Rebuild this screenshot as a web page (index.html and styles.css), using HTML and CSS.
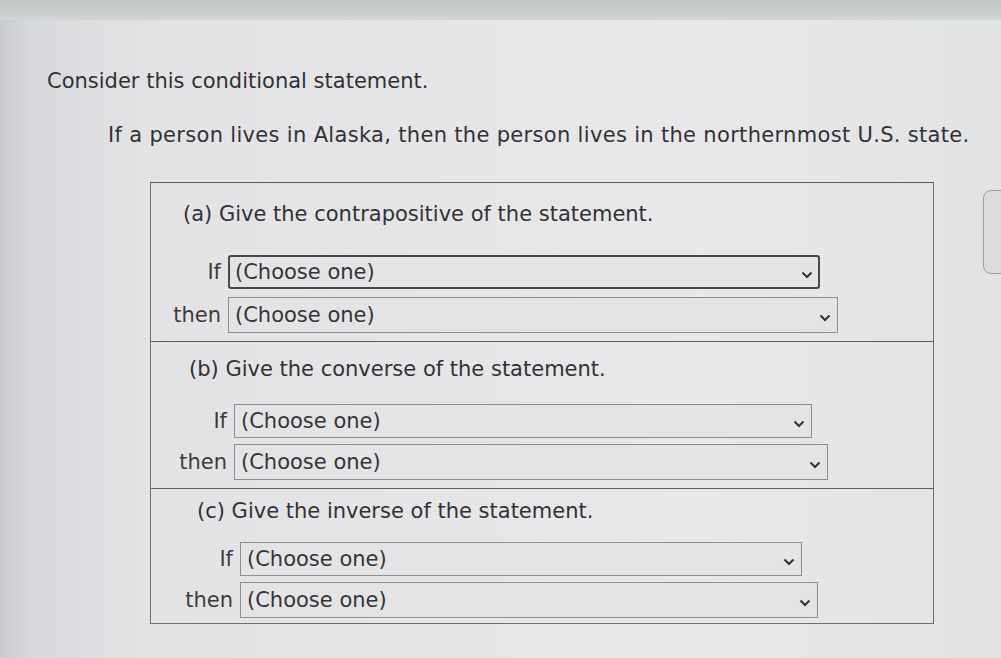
FILE: index.html
```html
<!DOCTYPE html>
<html>
<head>
<meta charset="utf-8">
<link rel="stylesheet" href="styles.css">
</head>
<body>
<div class="topbar"></div>
<main class="page">
  <p class="lead">Consider this conditional statement.</p>
  <p class="statement">If a person lives in Alaska, then the person lives in the northernmost U.S. state.</p>
  <div class="box">
    <section class="part pa">
      <p class="title">(a) Give the contrapositive of the statement.</p>
      <div class="rows">
        <span class="label">If</span>
        <div class="select focus"><span>(Choose one)</span><svg class="chev" viewBox="0 0 12 8" width="12" height="8"><path d="M1.5 1.5 L6 6 L10.5 1.5" fill="none" stroke="#333" stroke-width="2"/></svg></div>
        <span class="label">then</span>
        <div class="select wide"><span>(Choose one)</span><svg class="chev" viewBox="0 0 12 8" width="12" height="8"><path d="M1.5 1.5 L6 6 L10.5 1.5" fill="none" stroke="#333" stroke-width="2"/></svg></div>
      </div>
    </section>
    <section class="part pb">
      <p class="title">(b) Give the converse of the statement.</p>
      <div class="rows">
        <span class="label">If</span>
        <div class="select"><span>(Choose one)</span><svg class="chev" viewBox="0 0 12 8" width="12" height="8"><path d="M1.5 1.5 L6 6 L10.5 1.5" fill="none" stroke="#333" stroke-width="2"/></svg></div>
        <span class="label">then</span>
        <div class="select wide"><span>(Choose one)</span><svg class="chev" viewBox="0 0 12 8" width="12" height="8"><path d="M1.5 1.5 L6 6 L10.5 1.5" fill="none" stroke="#333" stroke-width="2"/></svg></div>
      </div>
    </section>
    <section class="part pc">
      <p class="title">(c) Give the inverse of the statement.</p>
      <div class="rows">
        <span class="label">If</span>
        <div class="select"><span>(Choose one)</span><svg class="chev" viewBox="0 0 12 8" width="12" height="8"><path d="M1.5 1.5 L6 6 L10.5 1.5" fill="none" stroke="#333" stroke-width="2"/></svg></div>
        <span class="label">then</span>
        <div class="select wide"><span>(Choose one)</span><svg class="chev" viewBox="0 0 12 8" width="12" height="8"><path d="M1.5 1.5 L6 6 L10.5 1.5" fill="none" stroke="#333" stroke-width="2"/></svg></div>
      </div>
    </section>
  </div>
  <div class="sidetab"></div>
</main>
</body>
</html>
```
FILE: styles.css
```css
html, body {
  margin: 0;
  height: 100%;
}
body {
  background: linear-gradient(90deg, #c9cacd 0px, #d8d9dc 30px, #e3e3e6 150px, #e8e8ea 700px, #e2e3e5 1001px);
  font-family: "DejaVu Sans", Verdana, sans-serif;
  color: #323234;
  overflow: hidden;
}
.topbar {
  height: 20px;
  background: linear-gradient(180deg, #c2c8c4 0%, #cbd0cc 70%, #d4d7d5 100%);
}
.page {
  position: relative;
  padding: 48px 0 0 47px;
}
.lead {
  margin: 0;
  font-size: 21px;
  line-height: 26px;
}
.statement {
  margin: 28px 0 0 61px;
  font-size: 21px;
  line-height: 26px;
  letter-spacing: 0.32px;
}
.box {
  margin: 34px 0 0 103px;
  width: 782px;
  border: 1px solid #6f6f71;
  border-top-color: #5a5a5c;
}
.part {
  padding: 18px 0 8px 20px;
}
.part + .part {
  border-top: 1px solid #5e5e60;
}
.title {
  margin: 0 0 0 12px;
  font-size: 21px;
  line-height: 26px;
}
.rows {
  margin-top: 28px;
  display: grid;
  grid-template-columns: 50px auto;
  column-gap: 7px;
  row-gap: 8px;
  justify-items: start;
  align-items: center;
}
.label {
  justify-self: end;
  font-size: 21px;
  line-height: 24px;
  color: #3c3c3e;
}
.select {
  box-sizing: border-box;
  display: flex;
  align-items: center;
  justify-content: space-between;
  width: 592px;
  height: 34px;
  padding: 0 6px 0 6px;
  border: 1px solid #8e8e90;
  background: #e4e4e6;
  font-size: 21px;
  color: #353537;
}
.select.wide {
  width: 610px;
  height: 36px;
}
.select.focus {
  border: 2px solid #4a4a4c;
  border-radius: 3px;
  padding-left: 5px;
  padding-right: 5px;
}
.chev {
  margin-top: 6px;
  flex: none;
}

.pb { padding-top: 14px; }
.pb .title { margin-left: 18px; }
.pb .rows { margin-top: 22px; row-gap: 6px; grid-template-columns: 56px auto; }
.pb .select { width: 578px; }
.pb .select.wide { width: 594px; }

.pc { padding-top: 9px; padding-bottom: 5px; }
.pc .title { margin-left: 26px; }
.pc .rows { margin-top: 18px; row-gap: 6px; grid-template-columns: 62px auto; }
.pc .select { width: 562px; }
.pc .select.wide { width: 578px; }

.sidetab {
  position: absolute;
  top: 170px;
  left: 983px;
  width: 40px;
  height: 82px;
  border: 1px solid #a0a0a2;
  border-radius: 8px;
  background: #dcdcde;
}
```
